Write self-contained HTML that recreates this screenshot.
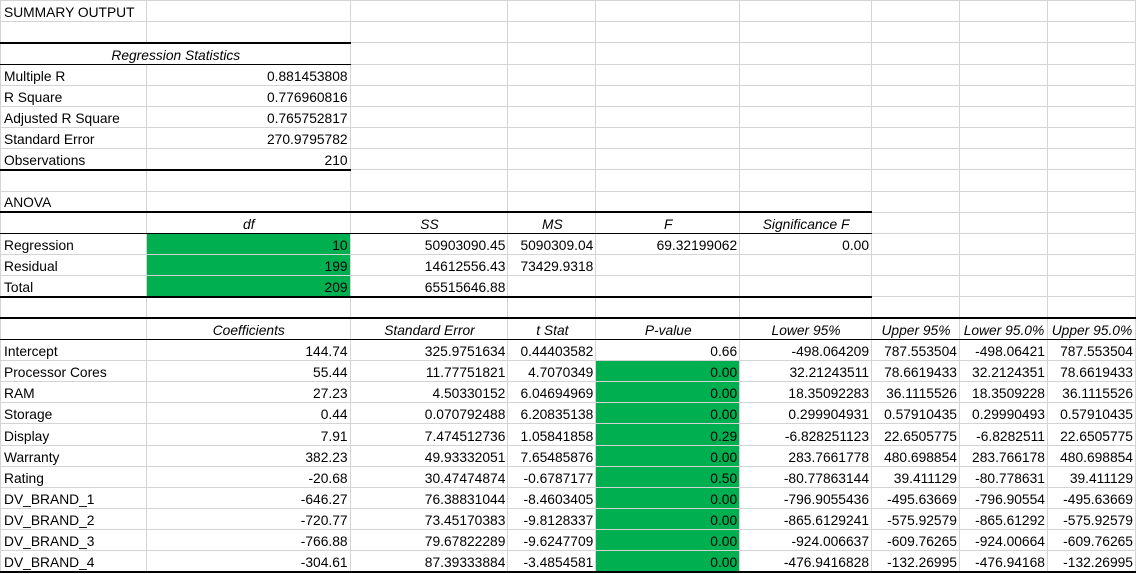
<!DOCTYPE html>
<html><head><meta charset="utf-8"><style>
body{margin:0;background:#fff;width:1136px;height:574px;overflow:hidden;font-family:"Liberation Sans",Arial,sans-serif;font-size:13.8px;color:#000}
table{border-collapse:collapse;table-layout:fixed;position:absolute;left:0;top:0;height:572px}
tr{height:21.18px}
td{padding:0 2px 1px 3px;border:1px solid #d4d4d4;white-space:nowrap;overflow:hidden;line-height:14px;vertical-align:bottom}
.r{text-align:right}.c{text-align:center}.i{font-style:italic}
.g{background:#00b050}
.tt td.k{border-top:2px solid #000}
.tb td.k{border-bottom:1px solid #000}
.bb td.k{border-bottom:2px solid #000}
</style></head><body>
<table>
<colgroup><col style="width:146px"><col style="width:204px"><col style="width:158px"><col style="width:88px"><col style="width:144px"><col style="width:132px"><col style="width:88px"><col style="width:88px"><col style="width:88px"></colgroup>
<tr><td>SUMMARY OUTPUT</td><td></td><td></td><td></td><td></td><td></td><td></td><td></td><td></td></tr>
<tr><td></td><td></td><td></td><td></td><td></td><td></td><td></td><td></td><td></td></tr>
<tr class="tt tb"><td class="k c i" colspan="2">Regression Statistics</td><td></td><td></td><td></td><td></td><td></td><td></td><td></td></tr>
<tr><td>Multiple R</td><td class="r">0.881453808</td><td></td><td></td><td></td><td></td><td></td><td></td><td></td></tr>
<tr><td>R Square</td><td class="r">0.776960816</td><td></td><td></td><td></td><td></td><td></td><td></td><td></td></tr>
<tr><td>Adjusted R Square</td><td class="r">0.765752817</td><td></td><td></td><td></td><td></td><td></td><td></td><td></td></tr>
<tr><td>Standard Error</td><td class="r">270.9795782</td><td></td><td></td><td></td><td></td><td></td><td></td><td></td></tr>
<tr class="bb"><td class="k">Observations</td><td class="k r">210</td><td></td><td></td><td></td><td></td><td></td><td></td><td></td></tr>
<tr><td></td><td></td><td></td><td></td><td></td><td></td><td></td><td></td><td></td></tr>
<tr><td>ANOVA</td><td></td><td></td><td></td><td></td><td></td><td></td><td></td><td></td></tr>
<tr class="tt tb"><td class="k"></td><td class="k c i">df</td><td class="k c i">SS</td><td class="k c i">MS</td><td class="k c i">F</td><td class="k c i">Significance F</td><td></td><td></td><td></td></tr>
<tr><td>Regression</td><td class="r g">10</td><td class="r">50903090.45</td><td class="r">5090309.04</td><td class="r">69.32199062</td><td class="r">0.00</td><td></td><td></td><td></td></tr>
<tr><td>Residual</td><td class="r g">199</td><td class="r">14612556.43</td><td class="r">73429.9318</td><td></td><td></td><td></td><td></td><td></td></tr>
<tr class="bb"><td class="k">Total</td><td class="k r g">209</td><td class="k r">65515646.88</td><td class="k"></td><td class="k"></td><td class="k"></td><td></td><td></td><td></td></tr>
<tr><td></td><td></td><td></td><td></td><td></td><td></td><td></td><td></td><td></td></tr>
<tr class="tt tb"><td class="k"></td><td class="k c i">Coefficients</td><td class="k c i">Standard Error</td><td class="k c i">t Stat</td><td class="k c i">P-value</td><td class="k c i">Lower 95%</td><td class="k c i">Upper 95%</td><td class="k c i">Lower 95.0%</td><td class="k c i">Upper 95.0%</td></tr>
<tr><td>Intercept</td><td class="r">144.74</td><td class="r">325.9751634</td><td class="r">0.44403582</td><td class="r">0.66</td><td class="r">-498.064209</td><td class="r">787.553504</td><td class="r">-498.06421</td><td class="r">787.553504</td></tr>
<tr><td>Processor Cores</td><td class="r">55.44</td><td class="r">11.77751821</td><td class="r">4.7070349</td><td class="r g">0.00</td><td class="r">32.21243511</td><td class="r">78.6619433</td><td class="r">32.2124351</td><td class="r">78.6619433</td></tr>
<tr><td>RAM</td><td class="r">27.23</td><td class="r">4.50330152</td><td class="r">6.04694969</td><td class="r g">0.00</td><td class="r">18.35092283</td><td class="r">36.1115526</td><td class="r">18.3509228</td><td class="r">36.1115526</td></tr>
<tr><td>Storage</td><td class="r">0.44</td><td class="r">0.070792488</td><td class="r">6.20835138</td><td class="r g">0.00</td><td class="r">0.299904931</td><td class="r">0.57910435</td><td class="r">0.29990493</td><td class="r">0.57910435</td></tr>
<tr><td>Display</td><td class="r">7.91</td><td class="r">7.474512736</td><td class="r">1.05841858</td><td class="r g">0.29</td><td class="r">-6.828251123</td><td class="r">22.6505775</td><td class="r">-6.8282511</td><td class="r">22.6505775</td></tr>
<tr><td>Warranty</td><td class="r">382.23</td><td class="r">49.93332051</td><td class="r">7.65485876</td><td class="r g">0.00</td><td class="r">283.7661778</td><td class="r">480.698854</td><td class="r">283.766178</td><td class="r">480.698854</td></tr>
<tr><td>Rating</td><td class="r">-20.68</td><td class="r">30.47474874</td><td class="r">-0.6787177</td><td class="r g">0.50</td><td class="r">-80.77863144</td><td class="r">39.411129</td><td class="r">-80.778631</td><td class="r">39.411129</td></tr>
<tr><td>DV_BRAND_1</td><td class="r">-646.27</td><td class="r">76.38831044</td><td class="r">-8.4603405</td><td class="r g">0.00</td><td class="r">-796.9055436</td><td class="r">-495.63669</td><td class="r">-796.90554</td><td class="r">-495.63669</td></tr>
<tr><td>DV_BRAND_2</td><td class="r">-720.77</td><td class="r">73.45170383</td><td class="r">-9.8128337</td><td class="r g">0.00</td><td class="r">-865.6129241</td><td class="r">-575.92579</td><td class="r">-865.61292</td><td class="r">-575.92579</td></tr>
<tr><td>DV_BRAND_3</td><td class="r">-766.88</td><td class="r">79.67822289</td><td class="r">-9.6247709</td><td class="r g">0.00</td><td class="r">-924.006637</td><td class="r">-609.76265</td><td class="r">-924.00664</td><td class="r">-609.76265</td></tr>
<tr class="bb"><td class="k">DV_BRAND_4</td><td class="k r">-304.61</td><td class="k r">87.39333884</td><td class="k r">-3.4854581</td><td class="k r g">0.00</td><td class="k r">-476.9416828</td><td class="k r">-132.26995</td><td class="k r">-476.94168</td><td class="k r">-132.26995</td></tr>
</table>
</body></html>
